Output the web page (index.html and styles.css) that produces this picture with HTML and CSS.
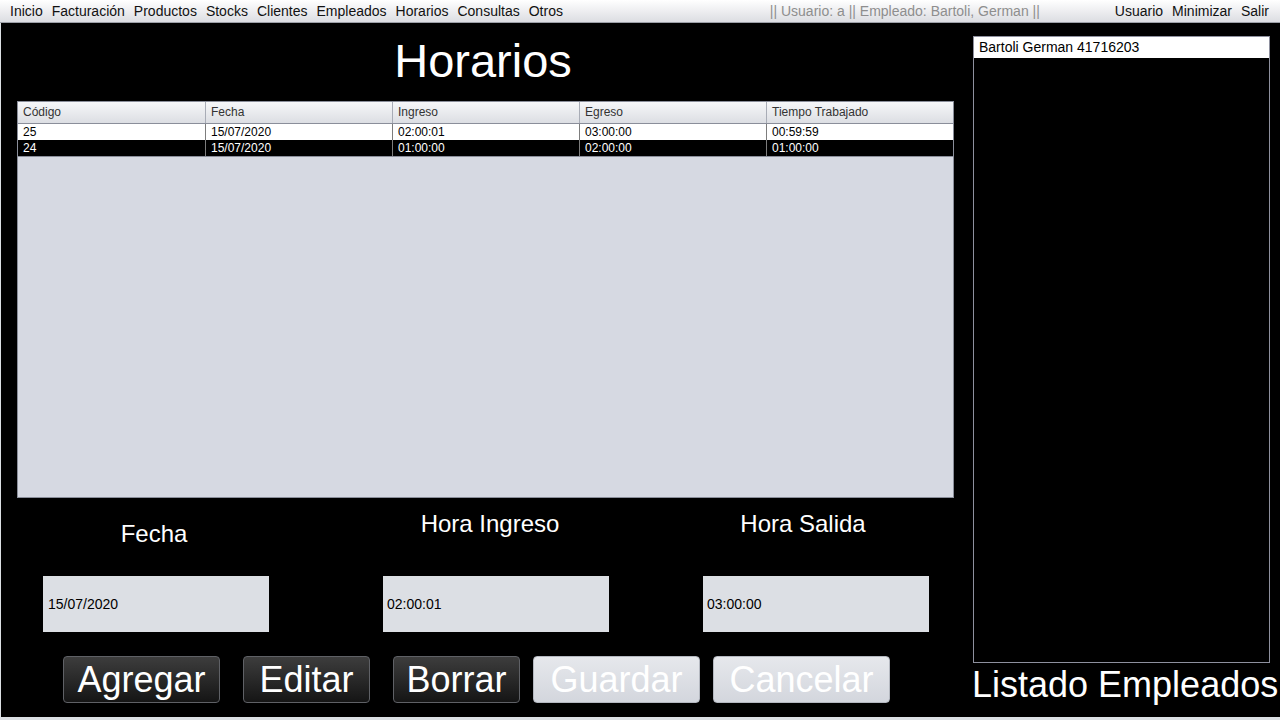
FILE: index.html
```html
<!DOCTYPE html>
<html lang="es">
<head>
  <meta charset="UTF-8" />
  <title>Horarios</title>
  <link rel="stylesheet" href="styles.css">
</head>
<body>
  <div class="menubar">
    <div class="menu">
      <span>Inicio</span>
      <span>Facturación</span>
      <span>Productos</span>
      <span>Stocks</span>
      <span>Clientes</span>
      <span>Empleados</span>
      <span>Horarios</span>
      <span>Consultas</span>
      <span>Otros</span>
    </div>
    <div class="estado">|| Usuario: a || Empleado: Bartoli, German ||</div>
    <div class="menu">
      <span>Usuario</span>
      <span>Minimizar</span>
      <span>Salir</span>
    </div>
  </div>

  <div class="principal">
    <div class="izquierda">
      <h1>Horarios</h1>

      <div class="tabla">
        <div class="fila encabezado">
          <div>Código</div><div>Fecha</div><div>Ingreso</div><div>Egreso</div><div>Tiempo Trabajado</div>
        </div>
        <div class="fila">
          <div>25</div><div>15/07/2020</div><div>02:00:01</div><div>03:00:00</div><div>00:59:59</div>
        </div>
        <div class="fila seleccionada">
          <div>24</div><div>15/07/2020</div><div>01:00:00</div><div>02:00:00</div><div>01:00:00</div>
        </div>
      </div>

      <div class="campos">
        <div class="campo c-fecha">
          <div class="etiqueta baja">Fecha</div>
          <div class="entrada">15/07/2020</div>
        </div>
        <div class="campo c-ingreso">
          <div class="etiqueta">Hora Ingreso</div>
          <div class="entrada">02:00:01</div>
        </div>
        <div class="campo c-salida">
          <div class="etiqueta">Hora Salida</div>
          <div class="entrada">03:00:00</div>
        </div>
      </div>

      <div class="botones">
        <button class="boton b-agregar">Agregar</button>
        <button class="boton b-editar">Editar</button>
        <button class="boton b-borrar">Borrar</button>
        <button class="boton apagado b-guardar" disabled>Guardar</button>
        <button class="boton apagado b-cancelar" disabled>Cancelar</button>
      </div>
    </div>

    <div class="derecha">
      <div class="lista">
        <div class="item">Bartoli German 41716203</div>
      </div>
      <div class="titulo-lista">Listado Empleados</div>
    </div>
  </div>
</body>
</html>
```

FILE: styles.css
```css
body {
  margin: 0;
  background-color: #dce0e4;
  font-family: "Liberation Sans", Arial, sans-serif;
  overflow: hidden;
}

/* barra de menu */
.menubar {
  height: 22px;
  border-bottom: 1px solid #9da0a8;
  background: linear-gradient(#ffffff, #dcdde2);
  display: flex;
  align-items: center;
  font-size: 14px;
  padding: 0 11px 0 10px;
}
.menu {
  display: flex;
  gap: 9px;
  color: #111;
}
.estado {
  margin-left: auto;
  margin-right: 75px;
  color: #8e8e8e;
}

/* panel principal */
.principal {
  margin-left: 1px;
  height: 694px;
  background-color: #000;
  display: flex;
  color: #fff;
}
.izquierda {
  width: 960px;
}
h1 {
  margin: 15px 0 0 0;
  height: 46px;
  line-height: 46px;
  font-size: 47px;
  font-weight: normal;
  text-align: center;
  padding-left: 4px;
}

/* tabla */
.tabla {
  margin: 17px 0 0 16px;
  width: 937px;
  height: 397px;
  box-sizing: border-box;
  border: 1px solid #8a8e9a;
  background-color: #d6d9e2;
  font-size: 12px;
}
.fila {
  display: grid;
  grid-template-columns: repeat(5, 1fr);
  height: 16px;
  line-height: 16px;
  background-color: #fff;
  color: #000;
}
.fila > div {
  padding-left: 5px;
  border-left: 1px solid #7d7d7d;
  white-space: nowrap;
}
.fila > div:first-child {
  border-left: none;
}
.encabezado {
  height: 21px;
  line-height: 21px;
  border-bottom: 1px solid #8a8e9a;
  background: linear-gradient(#f6f7f9, #dcdee3);
  color: #333;
}
.encabezado > div {
  border-left-color: #a8acb6;
}
.seleccionada {
  background-color: #000;
  color: #fff;
  border-bottom: 1px solid #8a8e9a;
}

/* campos */
.campos {
  display: flex;
  margin-top: 12px;
}
.campo {
  width: 226px;
}
.c-fecha { margin-left: 42px; }
.c-ingreso { margin-left: 114px; }
.c-salida { margin-left: 94px; }
.etiqueta {
  height: 66px;
  font-size: 24px;
  line-height: 28px;
  text-align: center;
  box-sizing: border-box;
}
.c-fecha .etiqueta { padding-right: 4px; }
.c-ingreso .etiqueta { padding-right: 12px; }
.c-salida .etiqueta { padding-right: 26px; }
.etiqueta.baja {
  padding-top: 10px;
}
.entrada {
  height: 56px;
  line-height: 56px;
  background-color: #dcdfe4;
  color: #000;
  font-size: 14px;
  padding-left: 4px;
}
.c-fecha .entrada { padding-left: 5px; }

/* botones */
.botones {
  display: flex;
  margin: 24px 0 0 62px;
}
.boton {
  height: 47px;
  padding: 0;
  font-family: "Liberation Sans", Arial, sans-serif;
  font-size: 36px;
  color: #fff;
  background: linear-gradient(#3d3d3d, #151515);
  border: 1px solid #5f6166;
  border-radius: 4px;
  margin-right: 23px;
}
.apagado {
  background: linear-gradient(#e6e8ec, #d3d6dd);
  border-color: #b4b8c0;
  color: #fff;
  margin-right: 13px;
}
.b-agregar { width: 157px; }
.b-editar { width: 127px; }
.b-borrar { width: 127px; margin-right: 13px; }
.b-guardar { width: 167px; }
.b-cancelar { width: 177px; }

/* listado de la derecha */
.derecha {
  margin-left: 12px;
  width: 307px;
}
.lista {
  margin-top: 13px;
  width: 297px;
  height: 627px;
  box-sizing: border-box;
  border: 1px solid #8e909e;
}
.item {
  height: 21px;
  line-height: 20px;
  background-color: #fff;
  color: #000;
  font-size: 14px;
  padding-left: 5px;
}
.titulo-lista {
  margin-top: 4px;
  margin-left: -1px;
  font-size: 36px;
  line-height: 35px;
  white-space: nowrap;
}
```
